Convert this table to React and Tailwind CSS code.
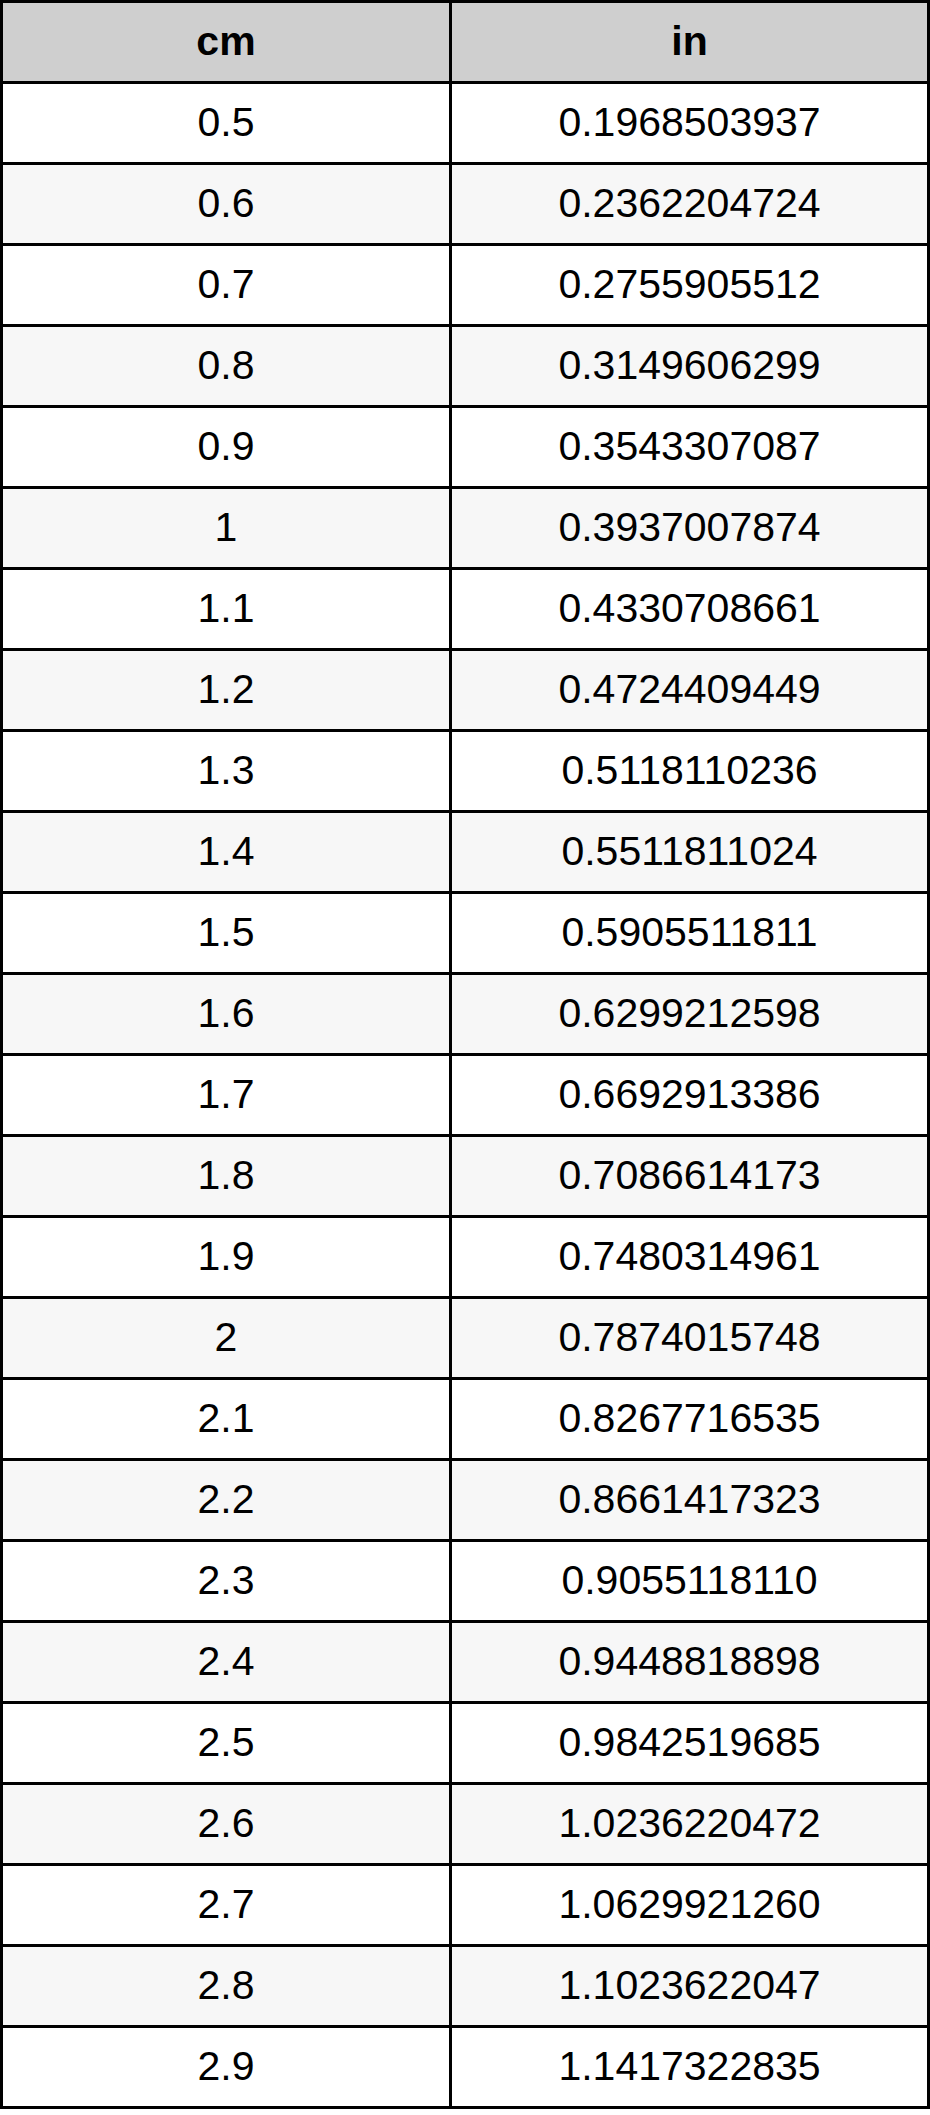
const rows = [
  ['0.5', '0.1968503937'],
  ['0.6', '0.2362204724'],
  ['0.7', '0.2755905512'],
  ['0.8', '0.3149606299'],
  ['0.9', '0.3543307087'],
  ['1', '0.3937007874'],
  ['1.1', '0.4330708661'],
  ['1.2', '0.4724409449'],
  ['1.3', '0.5118110236'],
  ['1.4', '0.5511811024'],
  ['1.5', '0.5905511811'],
  ['1.6', '0.6299212598'],
  ['1.7', '0.6692913386'],
  ['1.8', '0.7086614173'],
  ['1.9', '0.7480314961'],
  ['2', '0.7874015748'],
  ['2.1', '0.8267716535'],
  ['2.2', '0.8661417323'],
  ['2.3', '0.9055118110'],
  ['2.4', '0.9448818898'],
  ['2.5', '0.9842519685'],
  ['2.6', '1.0236220472'],
  ['2.7', '1.0629921260'],
  ['2.8', '1.1023622047'],
  ['2.9', '1.1417322835'],
];

export default function App() {
  return (
    <div className="w-[930px] bg-white font-['Liberation_Sans',Arial,sans-serif] text-[41px] text-black">
      <div className="border-[3px] border-black">
        <div className="flex h-[78px] bg-[#cfcfcf] font-bold">
          <div className="flex w-[449px] items-center justify-center border-r-[3px] border-black">cm</div>
          <div className="flex flex-1 items-center justify-center">in</div>
        </div>
        {rows.map(([cm, inch], i) => (
          <div
            key={cm}
            className={`flex h-[81px] border-t-[3px] border-black ${i % 2 === 1 ? 'bg-[#f7f7f7]' : 'bg-white'}`}
          >
            <div className="flex w-[449px] items-center justify-center border-r-[3px] border-black">{cm}</div>
            <div className="flex flex-1 items-center justify-center">{inch}</div>
          </div>
        ))}
      </div>
    </div>
  );
}
